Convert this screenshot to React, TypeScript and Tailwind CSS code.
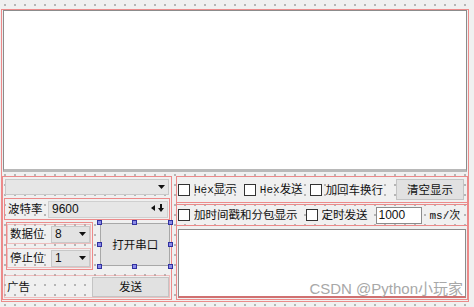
import React from 'react';

const cjk = "font-['SimSun','Noto_Sans_CJK_SC',sans-serif]";
const mono = "font-['Liberation_Mono','Noto_Sans_CJK_SC',monospace]";

const Check = ({ label, hex }: { label: string; hex?: boolean }) => (
  <div className="flex items-center gap-[4px] shrink-0 whitespace-nowrap">
    <div className="w-[12px] h-[12px] border border-[#333] bg-white" />
    <span className={`text-[11.5px] text-[#111] leading-none ${cjk}`}>
      {hex ? (
        <>
          <span className={`${mono} text-[11px]`}>Hex</span>
          {label}
        </>
      ) : (
        label
      )}
    </span>
  </div>
);

const Arrow = () => (
  <svg width="7" height="4" viewBox="0 0 7 4">
    <path d="M0 0h7L3.5 4z" fill="#111" />
  </svg>
);

const Combo = ({ value, className }: { value: string; className: string }) => (
  <div
    className={`flex items-center justify-between bg-[#e3e3e3] border border-[#c8c8c8] px-[3px] ${className}`}
  >
    <span className="text-[12px] text-[#111] font-['Liberation_Sans',sans-serif] leading-none">{value}</span>
    <Arrow />
  </div>
);

const Handle = ({ className }: { className: string }) => (
  <div className={`absolute w-[5px] h-[5px] border border-[#3030a0] bg-[#8a8ae6] ${className}`} />
);

export default function App() {
  return (
    <div className="w-[474px] h-[307px] overflow-hidden bg-[#f0f0f0] bg-[radial-gradient(circle,#b4b4b4_0.7px,transparent_0.9px)] bg-[length:10px_10px] pt-[9px] pl-[1px]">
      <div className="w-[468px] h-[293px] border border-[#ec8a8a] flex flex-col">
        {/* receive area */}
        <div className="mx-[1px] h-[162px] bg-white border border-[#8c8c8c] border-b-[3px] border-b-[#b8b8b8]" />

        <div className="flex gap-[4px] mt-[4px] h-[124px]">
          {/* left settings */}
          <div className="w-[170px] border border-[#ec8a8a] flex flex-col px-[1px] pt-[2px]">
            <Combo value="" className="h-[16px] mx-[1px] bg-[#e6e6e6]" />

            <div className="mt-[3px] h-[22px] border border-[#ec8a8a] flex items-center pl-[3px] pr-[1px]">
              <span className={`text-[11.5px] text-[#111] w-[40px] whitespace-nowrap ${cjk}`}>波特率</span>
              <div className="flex-1 h-[17px] bg-[#e6e6e6] border border-[#cfcfcf] flex items-center justify-between px-[3px]">
                <span className="text-[12px] text-[#111] font-['Liberation_Sans',sans-serif]">9600</span>
                <div className="flex items-center gap-[3px] pb-[2px]">
                  <svg width="4" height="6" viewBox="0 0 4 6"><path d="M4 0v6L0 3z" fill="#111" /></svg>
                  <svg width="6" height="8" viewBox="0 0 6 8"><path d="M2 0h2v4h2L3 8 0 4h2z" fill="#111" /></svg>
                </div>
              </div>
            </div>

            <div className="flex mt-[2px]">
              <div className="w-[88px] h-[48px] border border-[#ec8a8a] ml-[2px] flex flex-col justify-between py-[1px] pr-[1px]">
                <div className="flex items-center h-[20px] border border-[#ec8a8a]/50">
                  <span className={`text-[11.5px] text-[#111] w-[43px] pl-[2px] whitespace-nowrap ${cjk}`}>数据位</span>
                  <Combo value="8" className="flex-1 h-[17px]" />
                </div>
                <div className="flex items-center h-[20px] border border-[#ec8a8a]/50">
                  <span className={`text-[11.5px] text-[#111] w-[43px] pl-[2px] whitespace-nowrap ${cjk}`}>停止位</span>
                  <Combo value="1" className="flex-1 h-[17px]" />
                </div>
              </div>
              <div className="relative ml-[7px] w-[70px] h-[43px] mt-[1px]">
                <div className={`w-full h-full bg-[#e1e1e1] border border-[#a8a8a8] flex items-center justify-center text-[11.5px] text-[#111] whitespace-nowrap ${cjk}`}>
                  打开串口
                </div>
                <Handle className="-left-[3px] -top-[3px]" />
                <Handle className="left-[32px] -top-[3px]" />
                <Handle className="-right-[3px] -top-[3px]" />
                <Handle className="-left-[3px] top-[19px]" />
                <Handle className="-right-[3px] top-[19px]" />
                <Handle className="-left-[3px] -bottom-[3px]" />
                <Handle className="left-[32px] -bottom-[3px]" />
                <Handle className="-right-[3px] -bottom-[3px]" />
              </div>
            </div>

            <div className="flex items-center mt-[5px] h-[23px] border border-[#ec8a8a]/50">
              <span className={`text-[11.5px] text-[#111] w-[87px] pl-[2px] ${cjk}`}>广告</span>
              <div className={`flex-1 h-[20px] bg-[#e1e1e1] border border-[#c4c4c4] flex items-center justify-center text-[11.5px] text-[#111] ${cjk}`}>
                发送
              </div>
            </div>
          </div>

          {/* right options */}
          <div className="flex-1 min-w-0 border border-[#ec8a8a] flex flex-col">
            <div className="h-[26px] border-b border-[#ec8a8a] flex items-center pl-[1px] pr-[3px]">
              <Check label="显示" hex />
              <div className="w-[7px] shrink-0" />
              <Check label="发送" hex />
              <div className="w-[7px] shrink-0" />
              <Check label="加回车换行" />
              <div className={`ml-auto shrink-0 w-[68px] h-[21px] bg-[#e1e1e1] border border-[#c4c4c4] flex items-center justify-center text-[11.5px] text-[#111] whitespace-nowrap ${cjk}`}>
                清空显示
              </div>
            </div>
            <div className="h-[22px] mt-[1px] border-y border-[#ec8a8a] flex items-center pl-[1px]">
              <Check label="加时间戳和分包显示" />
              <div className="w-[8px] shrink-0" />
              <Check label="定时发送" />
              <div className="ml-[8px] shrink-0 w-[46px] h-[17px] bg-white border border-[#8c8c8c] flex items-center px-[2px] text-[12px] text-[#111] font-['Liberation_Sans',sans-serif]">
                1000
              </div>
              <span className={`ml-[8px] shrink-0 whitespace-nowrap text-[11px] text-[#111] ${mono}`}>
                ms/<span className={cjk}>次</span>
              </span>
            </div>
            <div className="relative flex-1 mx-[1px] mt-[3px] mb-[1px] bg-white border border-[#8c8c8c] border-b-2 border-b-[#d07070]">
              <span className="absolute right-[2px] bottom-[0px] whitespace-nowrap text-[15px] leading-none text-[#a8a8a8] font-['Liberation_Sans','Noto_Sans_CJK_SC',sans-serif]">
                CSDN @Python小玩家
              </span>
            </div>
          </div>
        </div>
      </div>
    </div>
  );
}
